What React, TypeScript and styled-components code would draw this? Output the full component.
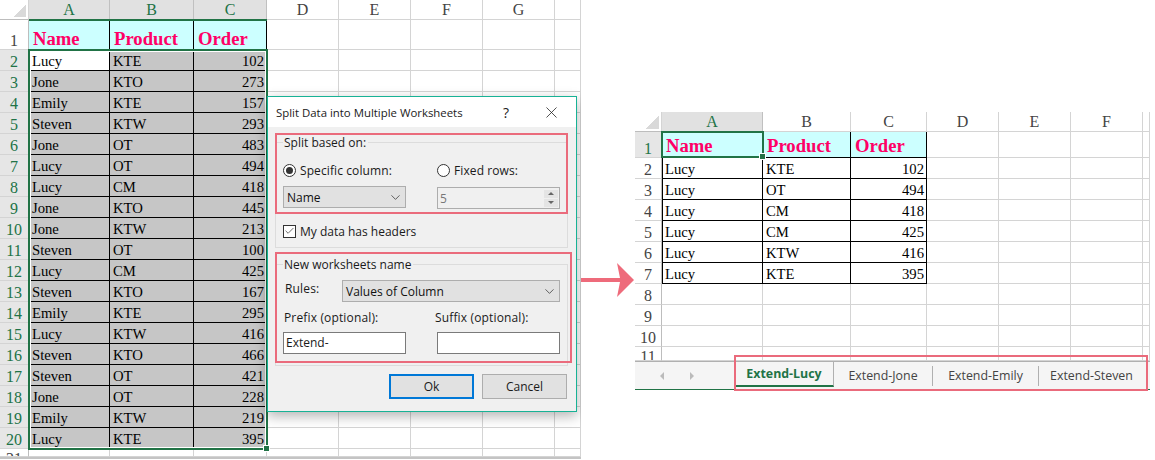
import styled, { createGlobalStyle } from "styled-components";
import { Check, ChevronDown, X } from "lucide-react";

const sourceRows: [string, string, number][] = [
  ["Lucy", "KTE", 102], ["Jone", "KTO", 273], ["Emily", "KTE", 157], ["Steven", "KTW", 293],
  ["Jone", "OT", 483], ["Lucy", "OT", 494], ["Lucy", "CM", 418], ["Jone", "KTO", 445],
  ["Jone", "KTW", 213], ["Steven", "OT", 100], ["Lucy", "CM", 425], ["Steven", "KTO", 167],
  ["Emily", "KTE", 295], ["Lucy", "KTW", 416], ["Steven", "KTO", 466], ["Steven", "OT", 421],
  ["Jone", "OT", 228], ["Emily", "KTW", 219], ["Lucy", "KTE", 395],
];

const lucyRows: [string, string, number][] = [
  ["Lucy", "KTE", 102], ["Lucy", "OT", 494], ["Lucy", "CM", 418],
  ["Lucy", "CM", 425], ["Lucy", "KTW", 416], ["Lucy", "KTE", 395],
];

const titles = ["Name", "Product", "Order"];
const tabs = ["Extend-Jone", "Extend-Emily", "Extend-Steven"];

export default function App() {
  return (
    <Page>
      <GlobalStyle />
      <SourcePane>
        <SourceGrid>
          <Corner />
          {["A", "B", "C"].map((c) => <ColHead key={c} $active>{c}</ColHead>)}
          {["D", "E", "F", "G"].map((c) => <ColHead key={c}>{c}</ColHead>)}
          <ColHead />

          <RowHead>1</RowHead>
          {titles.map((t) => <TitleCell key={t}>{t}</TitleCell>)}
          {[0, 1, 2, 3, 4].map((i) => <GridCell key={i} />)}

          {sourceRows.map((row, i) => (
            <Row key={i}>
              <RowHead $active>{i + 2}</RowHead>
              <DataCell $shaded={i > 0}>{row[0]}</DataCell>
              <DataCell $shaded>{row[1]}</DataCell>
              <DataCell $shaded $number>{row[2]}</DataCell>
              {[0, 1, 2, 3, 4].map((k) => <GridCell key={k} />)}
            </Row>
          ))}

          <ClippedHead>21</ClippedHead>
          {[0, 1, 2, 3, 4, 5, 6, 7].map((i) => <GridCell key={i} />)}

          <TopSelection />
          <RangeSelection><Handle /></RangeSelection>
        </SourceGrid>

        <Dialog>
          <TitleBar>
            <DialogTitle>Split Data into Multiple Worksheets</DialogTitle>
            <Help>?</Help>
            <CloseIcon size={19} strokeWidth={1} />
          </TitleBar>
          <DialogBody>
            <GroupBox $h={106} $gap={16}>
              <Legend>Split based on:</Legend>
              <TwoCols>
                <Choice>
                  <Radio $on />
                  Specific column:
                </Choice>
                <Choice>
                  <Radio />
                  Fixed rows:
                </Choice>
              </TwoCols>
              <TwoCols>
                <Select>
                  Name
                  <ChevronDown size={15} strokeWidth={1} />
                </Select>
                <Spinner>
                  5
                  <SpinButtons>
                    <SpinButton><SpinUp /></SpinButton>
                    <SpinButton><SpinDown /></SpinButton>
                  </SpinButtons>
                </Spinner>
              </TwoCols>
              <HeaderToggle>
                <CheckBox><Check size={12} strokeWidth={1.4} /></CheckBox>
                My data has headers
              </HeaderToggle>
            </GroupBox>

            <GroupBox $h={102} $gap={14}>
              <Legend>New worksheets name</Legend>
              <RulesRow>
                <FieldLabel>Rules:</FieldLabel>
                <Select $wide>
                  Values of Column
                  <ChevronDown size={15} strokeWidth={1} />
                </Select>
              </RulesRow>
              <TwoCols $top={8}>
                <FieldLabel>Prefix (optional):</FieldLabel>
                <FieldLabel $shift={-3}>Suffix (optional):</FieldLabel>
              </TwoCols>
              <TwoCols $top={6}>
                <TextBox>Extend-</TextBox>
                <TextBox />
              </TwoCols>
            </GroupBox>

            <Buttons>
              <Button $primary>Ok</Button>
              <Button>Cancel</Button>
            </Buttons>
          </DialogBody>
          <SplitHighlight />
          <NameHighlight />
        </Dialog>
      </SourcePane>

      <ArrowSlot>
        <svg width="54" height="36" viewBox="0 0 54 36">
          <path d="M0 16 H39 L36 1 L53 18 L36 35 L39 20 H0 Z" fill="#EE6B7B" />
        </svg>
      </ArrowSlot>

      <ResultPane>
        <ResultGrid>
          <Corner />
          <ColHead $active>A</ColHead>
          <ColHead>B</ColHead>
          <ColHead>C</ColHead>
          {["D", "E", "F"].map((c) => <ColHead key={c}>{c}</ColHead>)}
          <ColHead />

          <RowHead $active>1</RowHead>
          {titles.map((t) => <ResultTitle key={t}>{t}</ResultTitle>)}
          {[0, 1, 2, 3].map((i) => <GridCell key={i} />)}

          {lucyRows.map((row, i) => (
            <Row key={i}>
              <RowHead>{i + 2}</RowHead>
              <DataCell $first>{row[0]}</DataCell>
              <DataCell>{row[1]}</DataCell>
              <DataCell $number>{row[2]}</DataCell>
              {[0, 1, 2, 3].map((k) => <GridCell key={k} />)}
            </Row>
          ))}

          {[8, 9, 10].map((n) => (
            <Row key={n}>
              <RowHead>{n}</RowHead>
              {[0, 1, 2, 3, 4, 5, 6].map((k) => <GridCell key={k} />)}
            </Row>
          ))}
          <ClippedHead>11</ClippedHead>
          {[0, 1, 2, 3, 4, 5, 6].map((k) => <GridCell key={k} />)}

          <ActiveCell><Handle /></ActiveCell>
        </ResultGrid>

        <TabBar>
          <TabNav>
            <NavLeft />
            <NavRight />
          </TabNav>
          <ActiveTab>Extend-Lucy</ActiveTab>
          {tabs.map((t, i) => <Tab key={t} $divider={i > 0}>{t}</Tab>)}
          <TabHighlight />
        </TabBar>
      </ResultPane>
    </Page>
  );
}

const GlobalStyle = createGlobalStyle`
  html, body {
    margin: 0;
    padding: 0;
    background: #fff;
  }
`;

const Page = styled.div`
  display: flex;
  width: 1155px;
  height: 460px;
  overflow: hidden;
  background: #fff;
  font-family: "Liberation Serif", serif;
`;

const SourcePane = styled.div`
  position: relative;
  flex: 0 0 581px;
  height: 459px;
  border-bottom: 2px solid #c4c4c4;
  box-sizing: border-box;
  overflow: hidden;
`;

const SourceGrid = styled.div`
  position: relative;
  display: grid;
  grid-template-columns: 29px 81px 84px 73px 72px 72px 72px 72px 26px;
  grid-template-rows: 20px 30px repeat(19, 21px) 8px;
`;

const ResultGrid = styled.div`
  position: relative;
  display: grid;
  grid-template-columns: 27px 101px 88px 76px 72px 72px 72px 7px;
  grid-template-rows: 20px 26px repeat(9, 21px) 14px;
  height: 249px;
  overflow: hidden;
`;

const Row = styled.div`
  display: contents;
`;

const Corner = styled.div`
  background: linear-gradient(135deg, #fff 50%, #d9d9d9 50%);
  background-size: 13px 13px;
  background-position: right 2px bottom 2px;
  background-repeat: no-repeat;
  border-bottom: 1px solid #bdbdbd;
  border-right: 1px solid #d4d4d4;
`;

const ColHead = styled.div<{ $active?: boolean }>`
  display: flex;
  align-items: center;
  justify-content: center;
  box-sizing: border-box;
  padding-top: 1px;
  font-size: 16px;
  color: ${(p) => (p.$active ? "#217346" : "#444")};
  background: ${(p) => (p.$active ? "#e1e1e1" : "#fff")};
  border-right: 1px solid ${(p) => (p.$active ? "#c0c0c0" : "#d4d4d4")};
  border-bottom: 1px solid ${(p) => (p.$active ? "#bdbdbd" : "#d4d4d4")};
`;

const RowHead = styled.div<{ $active?: boolean }>`
  display: flex;
  align-items: flex-end;
  justify-content: center;
  box-sizing: border-box;
  overflow: hidden;
  line-height: 17px;
  font-size: 16px;
  color: ${(p) => (p.$active ? "#217346" : "#444")};
  background: ${(p) => (p.$active ? "#e6e6e6" : "#fff")};
  border-right: 1px solid #bdbdbd;
  border-bottom: 1px solid #d4d4d4;
`;

const ClippedHead = styled(RowHead)`
  align-items: flex-start;
  line-height: 20px;
`;

const GridCell = styled.div`
  box-sizing: border-box;
  border-right: 1px solid #d4d4d4;
  border-bottom: 1px solid #d4d4d4;
`;

const DataCell = styled.div<{ $shaded?: boolean; $number?: boolean; $first?: boolean }>`
  box-sizing: border-box;
  padding: 0 2px 0 ${(p) => (p.$first ? "2px" : "3px")};
  line-height: 22px;
  font-size: 14.67px;
  color: #000;
  overflow: hidden;
  text-align: ${(p) => (p.$number ? "right" : "left")};
  background: ${(p) => (p.$shaded ? "#c6c6c6" : "#fff")};
  border-right: 1px solid #000;
  border-bottom: 1px solid #000;
  border-left: ${(p) => (p.$first ? "1px solid #000" : "0")};
`;

const TitleCell = styled.div`
  box-sizing: border-box;
  display: flex;
  align-items: flex-end;
  padding: 0 4px;
  font-size: 18.67px;
  line-height: 22px;
  font-weight: 700;
  color: #ff0066;
  background: #ccffff;
  border-right: 1px solid #000;
`;

const ResultTitle = styled(TitleCell)`
  border-bottom: 1px solid #000;
`;

const TopSelection = styled.div`
  position: absolute;
  grid-column: 2 / 5;
  grid-row: 2 / 3;
  top: -1px;
  left: 0;
  right: 0;
  height: 2px;
  background: #217346;
`;

const RangeSelection = styled.div`
  position: absolute;
  grid-column: 2 / 5;
  grid-row: 3 / 22;
  inset: -1px -1px -1px -1px;
  border: 2px solid #217346;
  box-shadow: inset 0 0 0 1px #fff;
`;

const ActiveCell = styled.div`
  position: absolute;
  grid-column: 2 / 3;
  grid-row: 2 / 3;
  inset: -1px -1px 0 -1px;
  border: 2px solid #217346;
`;

const Handle = styled.span`
  position: absolute;
  right: -4px;
  bottom: -4px;
  width: 5px;
  height: 5px;
  background: #217346;
  border: 1px solid #fff;
`;

const Dialog = styled.section`
  position: absolute;
  left: 267px;
  top: 96px;
  width: 310px;
  height: 316px;
  box-sizing: border-box;
  border: 1px solid #17b295;
  background: #f0f0f0;
  box-shadow: 0 4px 12px rgba(0, 0, 0, 0.3);
  font-family: "Open Sans", sans-serif;
  font-size: 12px;
  color: #1a1a1a;
`;

const TitleBar = styled.header`
  display: flex;
  align-items: center;
  height: 30px;
  padding: 0 15px 0 8px;
  background: #fff;
`;

const DialogTitle = styled.h1`
  flex: 1;
  margin: 0;
  font-size: 11.4px;
  font-weight: 400;
`;

const Help = styled.span`
  margin-right: 33px;
  font-size: 14px;
`;

const CloseIcon = styled(X)`
  color: #222;
`;

const DialogBody = styled.div`
  display: flex;
  flex-direction: column;
  padding: 15px 8px 0 7px;
`;

const GroupBox = styled.fieldset<{ $h: number; $gap?: number }>`
  position: relative;
  box-sizing: border-box;
  height: ${(p) => p.$h}px;
  margin: 0 0 ${(p) => p.$gap ?? 15}px;
  padding: 0 7px;
  border: 1px solid #dcdcdc;
`;

const Legend = styled.div`
  position: absolute;
  top: -8px;
  left: 7px;
  padding: 0 2px 0 1px;
  line-height: 16px;
  background: #f0f0f0;
`;

const TwoCols = styled.div<{ $top?: number }>`
  display: grid;
  grid-template-columns: 123px 123px;
  column-gap: 31px;
  margin-top: ${(p) => p.$top ?? 0}px;
`;

const Choice = styled.label`
  display: flex;
  align-items: center;
  gap: 4px;
  height: 22px;
  margin-top: 16px;
  letter-spacing: 0.1px;
`;

const Radio = styled.span<{ $on?: boolean }>`
  display: inline-flex;
  align-items: center;
  justify-content: center;
  box-sizing: border-box;
  width: 13px;
  height: 13px;
  border-radius: 50%;
  border: 1px solid #333;
  background: #fff;
  &::after {
    content: "";
    width: 7px;
    height: 7px;
    border-radius: 50%;
    background: ${(p) => (p.$on ? "#333" : "transparent")};
  }
`;

const Select = styled.div<{ $wide?: boolean }>`
  display: flex;
  align-items: center;
  justify-content: space-between;
  box-sizing: border-box;
  height: 22px;
  padding: 0 2px 0 3px;
  width: ${(p) => (p.$wide ? "218px" : "123px")};
  margin-top: 5px;
  background: #e1e1e1;
  border: 1px solid #adadad;
  color: #111;
`;

const Spinner = styled.div`
  display: flex;
  align-items: center;
  justify-content: space-between;
  box-sizing: border-box;
  height: 22px;
  margin-top: 6px;
  padding: 0 1px 0 2px;
  border: 1px solid #adadad;
  color: #777;
`;

const SpinButtons = styled.div`
  display: flex;
  flex-direction: column;
  gap: 1px;
`;

const SpinButton = styled.div`
  display: flex;
  align-items: center;
  justify-content: center;
  width: 14px;
  height: 8px;
  background: #e4e4e4;
`;

const SpinUp = styled.span`
  border-left: 3px solid transparent;
  border-right: 3px solid transparent;
  border-bottom: 3px solid #666;
`;

const SpinDown = styled.span`
  border-left: 3px solid transparent;
  border-right: 3px solid transparent;
  border-top: 3px solid #666;
`;

const HeaderToggle = styled.label`
  display: flex;
  align-items: center;
  gap: 4px;
  margin-top: 15px;
  height: 14px;
`;

const CheckBox = styled.span`
  display: inline-flex;
  align-items: center;
  justify-content: center;
  box-sizing: border-box;
  width: 13px;
  height: 13px;
  border: 1px solid #333;
  background: #fff;
`;

const RulesRow = styled.div`
  display: flex;
  align-items: center;
  justify-content: space-between;
  margin-top: 10px;
  padding-left: 1px;
`;

const FieldLabel = styled.span<{ $shift?: number }>`
  padding-left: 1px;
  margin-left: ${(p) => p.$shift ?? 0}px;
  line-height: 16px;
  letter-spacing: 0.15px;
`;

const TextBox = styled.div`
  box-sizing: border-box;
  height: 22px;
  padding: 0 2px;
  line-height: 20px;
  background: #fff;
  border: 1px solid #7a7a7a;
`;

const Buttons = styled.div`
  display: flex;
  justify-content: flex-end;
  gap: 8px;
  margin-top: -6px;
  padding-right: 1px;
`;

const Button = styled.div<{ $primary?: boolean }>`
  display: flex;
  align-items: center;
  justify-content: center;
  box-sizing: border-box;
  width: 85px;
  height: 25px;
  background: #e1e1e1;
  border: ${(p) => (p.$primary ? "2px solid #0078d7" : "1px solid #adadad")};
`;

const SplitHighlight = styled.div`
  position: absolute;
  left: 7px;
  top: 36px;
  width: 293px;
  height: 81px;
  box-sizing: border-box;
  border: 2px solid #ea6b7c;
`;

const NameHighlight = styled.div`
  position: absolute;
  left: 7px;
  top: 155px;
  width: 297px;
  height: 111px;
  box-sizing: border-box;
  border: 2px solid #ea6b7c;
`;

const ArrowSlot = styled.div`
  flex: 0 0 54px;
  display: flex;
  margin-top: 262px;
`;

const ResultPane = styled.div`
  flex: 0 0 515px;
  margin-top: 112px;
`;

const TabBar = styled.div`
  position: relative;
  display: flex;
  align-items: center;
  height: 29px;
  box-sizing: border-box;
  background: #f5f5f5;
  border-top: 1px solid #b0b0b0;
  border-bottom: 1px solid #217346;
  font-family: "Open Sans", sans-serif;
  font-size: 12.4px;
  color: #444;
`;

const TabNav = styled.div`
  flex: 0 0 100px;
  display: flex;
  align-items: center;
  gap: 26px;
  padding-left: 25px;
  box-sizing: border-box;
`;

const NavLeft = styled.span`
  border-top: 4px solid transparent;
  border-bottom: 4px solid transparent;
  border-right: 4px solid #bbb;
`;

const NavRight = styled.span`
  border-top: 4px solid transparent;
  border-bottom: 4px solid transparent;
  border-left: 4px solid #bbb;
`;

const ActiveTab = styled.div`
  align-self: stretch;
  display: flex;
  align-items: center;
  justify-content: center;
  width: 99px;
  margin-bottom: 2px;
  box-sizing: border-box;
  font-weight: 700;
  color: #217346;
  border-right: 1px solid #b0b0b0;
  border-bottom: 2px solid #217346;
`;

const Tab = styled.div<{ $divider?: boolean }>`
  display: flex;
  align-items: center;
  justify-content: center;
  height: 20px;
  width: ${(p) => (p.$divider ? "106px" : "98px")};
  box-sizing: border-box;
  border-left: ${(p) => (p.$divider ? "1px solid #b0b0b0" : "0")};
`;

const TabHighlight = styled.div`
  position: absolute;
  left: 99px;
  top: -7px;
  width: 414px;
  height: 36px;
  box-sizing: border-box;
  border: 2px solid #ea6b7c;
`;
